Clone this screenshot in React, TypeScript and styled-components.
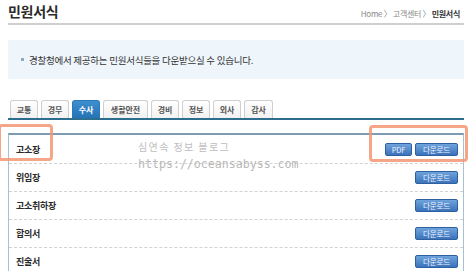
import React from "react";
import styled, { createGlobalStyle } from "styled-components";

const GlobalStyle = createGlobalStyle`
  html, body { margin: 0; padding: 0; background: #ffffff; }
  body { font-family: "Noto Sans CJK KR", "Noto Sans", sans-serif; color: #333; overflow: hidden; }
  * { box-sizing: border-box; }
`;

const Page = styled.div`
  position: relative;
  width: 474px;
  height: 271px;
  padding: 0 10px 0 8px;
  overflow: hidden;
`;

const Header = styled.div`
  display: flex;
  justify-content: space-between;
  align-items: flex-end;
  height: 25px;
  border-bottom: 2px solid #cfcfcf;
  padding-bottom: 4px;
`;

const Title = styled.h1`
  margin: 0;
  font-size: 14px;
  font-weight: 700;
  color: #2b2b2b;
  line-height: 16px;
  letter-spacing: -0.3px;
`;

const Crumbs = styled.div`
  font-size: 8px;
  color: #888;
  line-height: 10px;
  margin-right: 4px;
  letter-spacing: -0.3px;
`;

const CrumbCurrent = styled.b`
  color: #333;
  font-weight: 700;
`;

const Info = styled.div`
  margin-top: 15px;
  height: 39px;
  background: #eef5fb;
  display: flex;
  align-items: center;
  padding-left: 13px;
  font-size: 9.5px;
  color: #333;
  letter-spacing: -0.25px;
`;

const Bullet = styled.span`
  display: inline-block;
  width: 3px;
  height: 3px;
  background: #8fa9c0;
  margin-right: 5px;
`;

const Tabs = styled.div`
  margin-top: 21px;
  display: flex;
  gap: 3px;
  padding-left: 2px;
  border-bottom: 2px solid #2d6e8e;
`;

const Tab = styled.div<{ $active?: boolean; $w: number }>`
  width: ${(p) => p.$w}px;
  height: 18px;
  display: flex;
  align-items: center;
  justify-content: center;
  font-size: 8px;
  font-weight: 700;
  border: 1px solid ${(p) => (p.$active ? "#2a79b8" : "#cfcfcf")};
  border-bottom: none;
  border-radius: 3px 3px 0 0;
  color: ${(p) => (p.$active ? "#ffffff" : "#555")};
  background: ${(p) =>
    p.$active ? "linear-gradient(#3d8fcf, #2573b5)" : "linear-gradient(#ffffff, #f1f1f1)"};
`;

const List = styled.div`
  margin-top: 13px;
  border: 1px solid #a8c0d4;
  border-top: 2px solid #7b9cb4;
`;

const Row = styled.div<{ $first?: boolean }>`
  height: ${(p) => (p.$first ? 29 : 28)}px;
  display: flex;
  align-items: center;
  justify-content: space-between;
  padding: 0 5px 0 7px;
  border-bottom: 1px dashed #d2d2d2;
`;

const RowName = styled.span`
  font-size: 9px;
  font-weight: 700;
  color: #2a2a2a;
  letter-spacing: -0.3px;
`;

const Buttons = styled.div`
  display: flex;
  gap: 3px;
`;

const Btn = styled.span<{ $w: number }>`
  width: ${(p) => p.$w}px;
  height: 13px;
  display: flex;
  align-items: center;
  justify-content: center;
  font-size: 7.5px;
  color: #eef3fd;
  background: linear-gradient(#6fa3dc, #3c72bb);
  border: 1px solid #2e5f9e;
  border-radius: 2px;
  letter-spacing: -0.2px;
`;

const Highlight = styled.div<{ $x: number; $y: number; $w: number; $h: number }>`
  position: absolute;
  left: ${(p) => p.$x}px;
  top: ${(p) => p.$y}px;
  width: ${(p) => p.$w}px;
  height: ${(p) => p.$h}px;
  border: 3.5px solid rgba(244, 150, 115, 0.85);
  border-radius: 4px;
  pointer-events: none;
`;

const Watermark = styled.div`
  position: absolute;
  left: 138px;
  top: 139px;
  color: #bdbdbd;
  pointer-events: none;
`;

const WmTitle = styled.div`
  font-size: 10px;
  letter-spacing: 1.4px;
  line-height: 16px;
  font-family: "Noto Sans CJK KR", sans-serif;
`;

const WmUrl = styled.div`
  margin-top: 2px;
  font-family: "DejaVu Sans Mono", monospace;
  font-size: 11.6px;
  line-height: 14px;
  color: #b8b8b8;
`;

const tabs: [string, number][] = [
  ["교통", 28],
  ["경무", 28],
  ["수사", 28],
  ["생활안전", 45],
  ["경비", 28],
  ["정보", 28],
  ["외사", 28],
  ["감사", 29],
];

const rows = ["고소장", "위임장", "고소취하장", "합의서", "진술서"];

export default function App() {
  return (
    <>
      <GlobalStyle />
      <Page>
        <Header>
          <Title>민원서식</Title>
          <Crumbs>
            Home 〉 고객센터 〉 <CrumbCurrent>민원서식</CrumbCurrent>
          </Crumbs>
        </Header>
        <Info>
          <Bullet />
          경찰청에서 제공하는 민원서식들을 다운받으실 수 있습니다.
        </Info>
        <Tabs>
          {tabs.map(([t, w]) => (
            <Tab key={t} $w={w} $active={t === "수사"}>
              {t}
            </Tab>
          ))}
        </Tabs>
        <List>
          {rows.map((r, i) => (
            <Row key={r} $first={i === 0}>
              <RowName>{r}</RowName>
              <Buttons>
                {i === 0 && <Btn $w={27}>PDF</Btn>}
                <Btn $w={43}>다운로드</Btn>
              </Buttons>
            </Row>
          ))}
        </List>
        <Watermark>
          <WmTitle>심연속 정보 블로그</WmTitle>
          <WmUrl>https://oceansabyss.com</WmUrl>
        </Watermark>
        <Highlight $x={-2} $y={124} $w={55} $h={37} />
        <Highlight $x={369} $y={125} $w={99} $h={37} />
      </Page>
    </>
  );
}
